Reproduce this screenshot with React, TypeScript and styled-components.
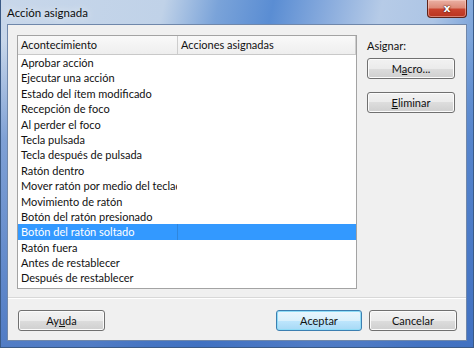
import React from "react";
import styled, { createGlobalStyle } from "styled-components";

const GlobalStyle = createGlobalStyle`
  html, body { margin: 0; padding: 0; background: #ffffff; }
  body { font-family: "Lato", "Noto Sans", sans-serif; font-size: 11px; color: #000; }
  * { box-sizing: border-box; }
`;

const Window = styled.div`
  width: 474px;
  height: 348px;
  display: flex;
  flex-direction: column;
  padding: 0 6px 6px 6px;
  border: 1px solid #3a5a86;
  border-top: none;
  background:
    linear-gradient(to bottom, rgba(70,120,200,0) 0px, rgba(70,120,200,0) 40px, rgba(68,116,196,0.55) 140px, rgba(60,108,190,0.85) 348px),
    linear-gradient(102deg, #c8d7ea 0%, #c0d2e8 30%, #7aa3d9 40%, #5a8dd3 50%, #88abdd 60%, #b6cbe7 70%, #adc5e5 80%, #6f9bd7 90%, #5f8fd2 100%);
`;

const TitleBar = styled.div`
  height: 24px;
  display: flex;
  align-items: flex-start;
  justify-content: space-between;
`;

const Title = styled.span`
  font-size: 11.5px;
  line-height: 25px;
  color: #0d0d0d;
  text-shadow: 0 0 8px rgba(255,255,255,0.9);
`;

const CloseButton = styled.div`
  width: 40px;
  height: 18px;
  border: 1px solid #5e2319;
  border-top: none;
  border-radius: 0 0 4px 4px;
  background: linear-gradient(to bottom, #eab0a3 0%, #de8b79 45%, #c9432e 55%, #b8341f 100%);
  box-shadow: inset 0 0 0 1px rgba(255,220,210,0.45);
  display: flex;
  align-items: center;
  justify-content: center;
  color: #fff;
  font-family: "DejaVu Sans", sans-serif;
  font-weight: bold;
  font-size: 11px;
  text-shadow: 0 0 2px #4a140c, 0 0 1px #4a140c;
`;

const Client = styled.div`
  flex: 1;
  display: flex;
  flex-direction: column;
  background: #f0f0f0;
  border: 1px solid #6f87aa;
`;

const Main = styled.div`
  display: flex;
  gap: 10px;
  padding: 10px 10px 0 9px;
`;

const ListBox = styled.div`
  width: 340px;
  height: 254px;
  border: 1px solid #a3a3a3;
  background: #ffffff;
  display: flex;
  flex-direction: column;
  overflow: hidden;
`;

const HeaderRow = styled.div`
  display: flex;
  height: 19px;
  background: linear-gradient(to bottom, #f9f9f9, #eeeeee);
  border-bottom: 1px solid #c9c9c9;
`;

const HeaderCell = styled.div<{ $w?: number }>`
  ${(p) => (p.$w ? `width: ${p.$w}px;` : "flex: 1;")}
  padding-left: 3px;
  line-height: 18px;
  color: #111;
  white-space: nowrap;
  overflow: hidden;
  border-right: 1px solid #cdcdcd;
`;

const Row = styled.div<{ $sel?: boolean }>`
  display: flex;
  height: 15.4px;
  line-height: 15.4px;
  background: ${(p) => (p.$sel ? "#3399ff" : "transparent")};
  color: ${(p) => (p.$sel ? "#ffffff" : "#111111")};
`;

const Cell = styled.div<{ $w?: number; $sel?: boolean }>`
  ${(p) => (p.$w ? `width: ${p.$w}px;` : "flex: 1;")}
  padding-left: 3px;
  white-space: nowrap;
  overflow: hidden;
  border-right: 1px solid ${(p) => (p.$sel && p.$w ? "#2f86dd" : "transparent")};
`;

const Side = styled.div`
  flex: 1;
  display: flex;
  flex-direction: column;
  padding-top: 2px;
`;

const Label = styled.div`
  line-height: 17px;
  color: #111;
  margin-bottom: 4px;
`;

const Button = styled.button<{ $default?: boolean; $w?: number }>`
  width: ${(p) => p.$w ?? 88}px;
  height: 21px;
  padding: 0;
  font-family: inherit;
  font-size: 11px;
  color: #111;
  border: 1px solid ${(p) => (p.$default ? "#3c7fb1" : "#707070")};
  border-radius: 3px;
  background: ${(p) =>
    p.$default
      ? "linear-gradient(to bottom, #eaf6fd 0%, #d9f0fc 50%, #bee6fd 50%, #a7d9f5 100%)"
      : "linear-gradient(to bottom, #f2f2f2 0%, #ebebeb 50%, #dddddd 50%, #cfcfcf 100%)"};
  box-shadow: inset 0 0 0 1px ${(p) => (p.$default ? "#8fdcf7" : "#fbfbfb")};
  display: flex;
  align-items: center;
  justify-content: center;
`;

const SideButton = styled(Button)`
  margin-bottom: 13px;
`;

const Separator = styled.div`
  margin-top: 8px;
  border-top: 1px solid #d8d8d8;
  border-bottom: 1px solid #ffffff;
`;

const Footer = styled.div`
  display: flex;
  align-items: center;
  padding: 11px 9px 0 10px;
  gap: 7px;
`;

const Spacer = styled.div`
  flex: 1;
`;

const events = [
  "Aprobar acción",
  "Ejecutar una acción",
  "Estado del ítem modificado",
  "Recepción de foco",
  "Al perder el foco",
  "Tecla pulsada",
  "Tecla después de pulsada",
  "Ratón dentro",
  "Mover ratón por medio del teclado",
  "Movimiento de ratón",
  "Botón del ratón presionado",
  "Botón del ratón soltado",
  "Ratón fuera",
  "Antes de restablecer",
  "Después de restablecer",
];

export default function App() {
  return (
    <>
      <GlobalStyle />
      <Window>
        <TitleBar>
          <Title>Acción asignada</Title>
          <CloseButton>x</CloseButton>
        </TitleBar>
        <Client>
          <Main>
            <ListBox>
              <HeaderRow>
                <HeaderCell $w={160}>Acontecimiento</HeaderCell>
                <HeaderCell>Acciones asignadas</HeaderCell>
              </HeaderRow>
              {events.map((e, i) => {
                const sel = i === 11;
                return (
                  <Row key={e} $sel={sel}>
                    <Cell $w={160} $sel={sel}>{e}</Cell>
                    <Cell $sel={sel} />
                  </Row>
                );
              })}
            </ListBox>
            <Side>
              <Label>Asignar:</Label>
              <SideButton>
                M<u>a</u>cro...
              </SideButton>
              <SideButton>
                <u>E</u>liminar
              </SideButton>
            </Side>
          </Main>
          <Separator />
          <Footer>
            <Button $w={87}>
              Ay<u>u</u>da
            </Button>
            <Spacer />
            <Button $default $w={86}>Aceptar</Button>
            <Button $w={88}>Cancelar</Button>
          </Footer>
        </Client>
      </Window>
    </>
  );
}
